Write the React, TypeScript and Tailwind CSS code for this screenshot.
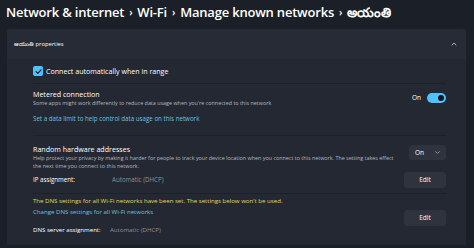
import { ChevronDown, ChevronUp } from 'lucide-react'

function Divider() {
  return <div className="h-px bg-[#1c2029]" />
}

function Checkbox() {
  return (
    <div className="flex h-[10px] w-[10px] items-center justify-center rounded-[2px] bg-[#4cc2ff]">
      <svg width="7" height="7" viewBox="0 0 10 10" fill="none">
        <path d="M1.5 5.2 4 7.6 8.6 2.6" stroke="#10161d" strokeWidth="1.6" strokeLinecap="round" strokeLinejoin="round" />
      </svg>
    </div>
  )
}

function Toggle() {
  return (
    <div className="flex h-[10px] w-[19px] items-center justify-end rounded-full bg-[#4cc2ff] pr-[2px]">
      <div className="h-[6px] w-[6px] rounded-full bg-[#10161d]" />
    </div>
  )
}

function EditButton() {
  return (
    <button
      type="button"
      className="flex h-[16px] w-[42px] items-center justify-center rounded-[3px] bg-[#2e333d] text-[6.5px] text-white"
    >
      Edit
    </button>
  )
}

export default function App() {
  return (
    <div className="h-[248px] w-[474px] overflow-hidden bg-[#1b1f27] font-['Open_Sans','Noto_Sans',sans-serif] text-white">
      <div className="flex h-[29px] items-center whitespace-nowrap pl-[6px] pb-[4px] text-[13px] font-semibold tracking-[-0.2px]">
        <span>Network &amp; internet</span>
        <span className="px-[5px] text-[10px]">›</span>
        <span>Wi-Fi</span>
        <span className="px-[5px] text-[10px]">›</span>
        <span>Manage known networks</span>
        <span className="px-[5px] text-[10px]">›</span>
        <span>అయంతి</span>
      </div>

      <div className="ml-[7px] w-[459px] overflow-hidden rounded-t-[3px]">
        <div className="flex h-[30px] items-center justify-between bg-[#272b35] pl-[7px] pr-[8px]">
          <span className="text-[5.8px]">అయంతి properties</span>
          <ChevronUp size={8} strokeWidth={2.5} className="text-[#c8ccd2]" />
        </div>
        <div className="whitespace-nowrap bg-[#242832] pl-[26px] pr-[20px]">
          <div className="flex h-[24px] items-center gap-[3px]">
            <Checkbox />
            <span className="text-[7.1px]">Connect automatically when in range</span>
          </div>
          <Divider />

          <div className="flex h-[51px] flex-col pt-[5px]">
            <div className="flex items-center justify-between">
              <div className="flex flex-col">
                <span className="text-[7.1px] leading-[10px]">Metered connection</span>
                <span className="text-[5.4px] leading-[8px] text-[#b4b8c0]">
                  Some apps might work differently to reduce data usage when you&apos;re connected to this network
                </span>
              </div>
              <div className="flex items-center gap-[6px]">
                <span className="text-[6.5px]">On</span>
                <Toggle />
              </div>
            </div>
            <span className="mt-[7px] text-[6.2px] text-[#6fc0dc]">
              Set a data limit to help control data usage on this network
            </span>
          </div>
          <Divider />

          <div className="flex h-[57px] flex-col pt-[8px]">
            <div className="flex items-start justify-between">
              <div className="flex flex-col">
                <span className="text-[7.1px] leading-[10px]">Random hardware addresses</span>
                <span className="text-[5.4px] leading-[8px] text-[#b4b8c0]">
                  Help protect your privacy by making it harder for people to track your device location when you connect to this network. The setting takes effect
                </span>
                <span className="text-[5.4px] leading-[8px] text-[#b4b8c0]">
                  the next time you connect to this network.
                </span>
              </div>
              <div className="mt-[1px] flex h-[15px] w-[37px] items-center justify-between rounded-[3px] bg-[#2e333d] pl-[6px] pr-[5px]">
                <span className="text-[6.5px]">On</span>
                <ChevronDown size={7} strokeWidth={2.5} className="text-[#b4b8c0]" />
              </div>
            </div>
            <div className="mt-[2px] flex items-center justify-between">
              <div className="flex text-[6.2px]">
                <span className="w-[79px]">IP assignment:</span>
                <span className="text-[#8d929b]">Automatic (DHCP)</span>
              </div>
              <EditButton />
            </div>
          </div>
          <Divider />

          <div className="flex h-[51px] flex-col pt-[2px]">
            <span className="text-[6.1px] leading-[10px] text-[#e4da45]">
              The DNS settings for all Wi-Fi networks have been set. The settings below won&apos;t be used.
            </span>
            <div className="flex items-start justify-between">
              <div className="flex flex-col">
                <span className="text-[6.1px] leading-[11px] text-[#6fc0dc]">
                  Change DNS settings for all Wi-Fi networks
                </span>
                <div className="mt-[8px] flex text-[6.1px] leading-[10px]">
                  <span className="w-[77px]">DNS server assignment:</span>
                  <span className="text-[#8d929b]">Automatic (DHCP)</span>
                </div>
              </div>
              <div className="mt-[4px]">
                <EditButton />
              </div>
            </div>
          </div>
        </div>
      </div>
    </div>
  )
}
